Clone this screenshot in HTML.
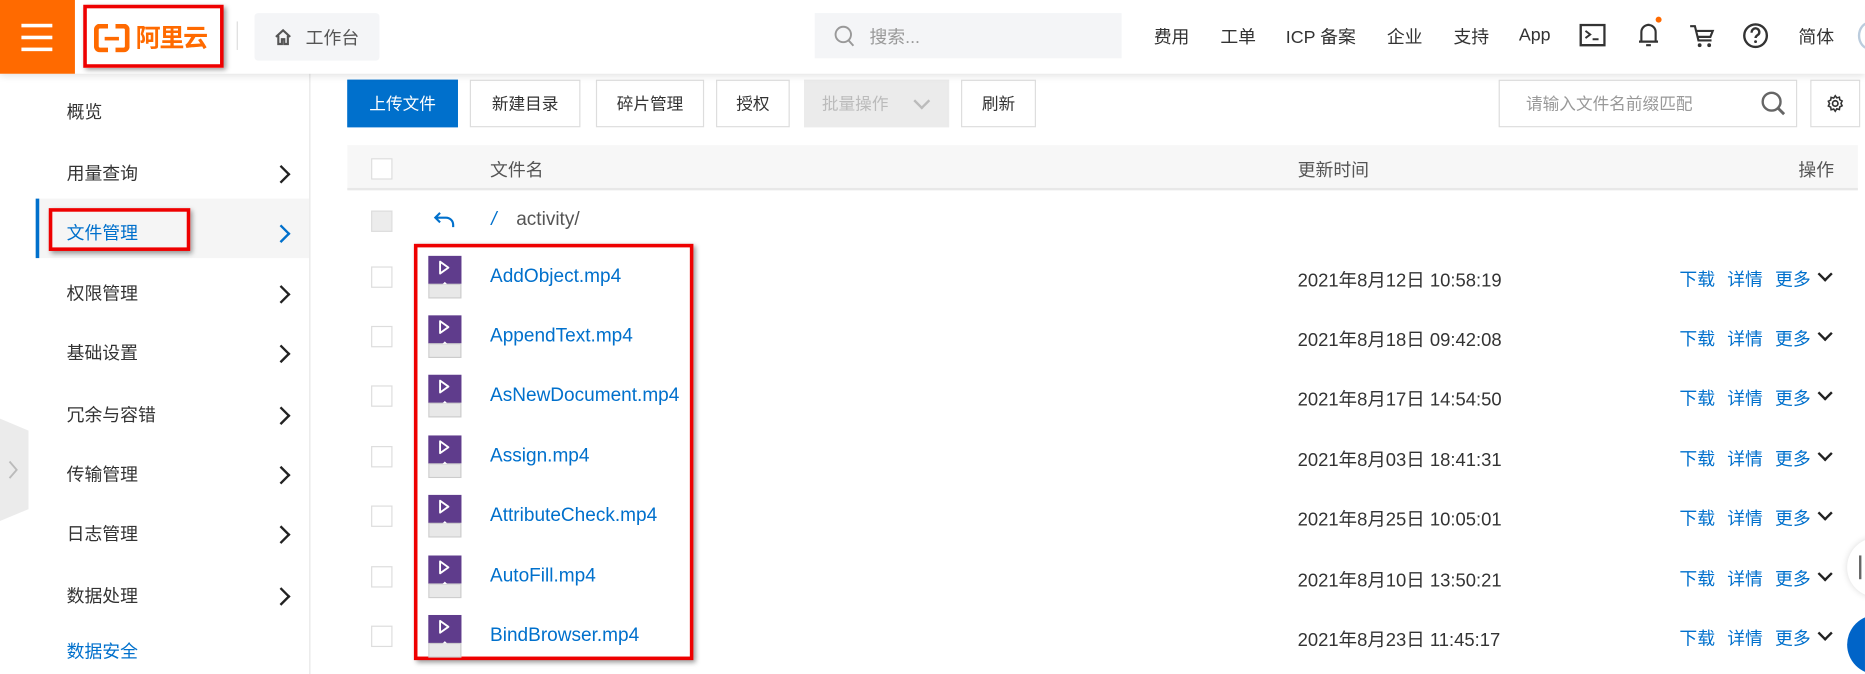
<!DOCTYPE html>
<html><head><meta charset="utf-8"><style>
*{margin:0;padding:0;box-sizing:border-box}
body{width:1865px;height:674px;overflow:hidden;background:#fff;font-family:"Liberation Sans","Noto Sans CJK SC",sans-serif;color:#333;position:relative}
#w{position:absolute;left:0;top:0;width:1568px;height:567px;transform:scale(1.1894);transform-origin:0 0;overflow:hidden}
.a{position:absolute}
.hdr{left:0;top:0;width:1568px;height:62px;background:#fff;box-shadow:0 2px 6px rgba(0,0,0,.12);z-index:2}
.nav{font-size:15px;color:#333;top:20px}
.side{font-size:15px;color:#333;left:56px}
.chev{left:231px;width:11px;height:11px;border-right:2px solid #222;border-top:2px solid #222;transform:rotate(45deg)}
.btn{top:67px;height:40px;border:1px solid #ddd;background:#fff;font-size:14px;color:#333;text-align:center;line-height:38px}
.cb{left:312px;width:18px;height:18px;border:1px solid #ddd;background:#fff}
.ic{left:360px;width:28px;height:36px}
.fn{left:412px;font-size:16px;color:#0070cc}
.dt{left:1091px;font-size:15.5px;color:#333}
.op{left:1412px;font-size:15px;color:#0070cc;word-spacing:6px}
.dn{left:1530px;width:9px;height:9px;border-right:2px solid #222;border-bottom:2px solid #222;transform:rotate(45deg)}
</style></head><body><div id="w">
<div class="a hdr">
 <div class="a" style="left:0;top:0;width:63px;height:62px;background:#ff6a00">
  <div class="a" style="left:18px;top:20px;width:26px;height:3px;background:#fff"></div>
  <div class="a" style="left:18px;top:30px;width:26px;height:3px;background:#fff"></div>
  <div class="a" style="left:18px;top:40px;width:26px;height:3px;background:#fff"></div>
 </div>
 <div class="a" style="left:70px;top:4px;width:118px;height:53px;border:3px solid #e00;box-shadow:2px 2px 4px rgba(0,0,0,.4)"></div>
 <div class="a" style="left:79px;top:20px;width:12px;height:24px;border:4px solid #ff6a00;border-right:none;border-radius:5px 0 0 5px"></div>
 <div class="a" style="left:97px;top:20px;width:12px;height:24px;border:4px solid #ff6a00;border-left:none;border-radius:0 5px 5px 0"></div>
 <div class="a" style="left:88px;top:31px;width:12px;height:3px;background:#ff6a00"></div>
 <div class="a" style="left:114px;top:16px;font-size:21px;font-weight:bold;color:#ff6a00;letter-spacing:-1px">阿里云</div>
 <div class="a" style="left:199px;top:18px;width:1px;height:24px;background:#ddd"></div>
 <div class="a" style="left:214px;top:11px;width:105px;height:40px;background:#f4f5f7;border-radius:3px">
  <svg class="a" style="left:16px;top:12px" width="16" height="16" viewBox="0 0 16 16"><path d="M2 8L8 2.5 14 8M4 7v7h3v-4h2v4h3V7" fill="none" stroke="#555" stroke-width="1.8"/></svg>
  <div class="a" style="left:43px;top:10px;font-size:15px;color:#555">工作台</div>
 </div>
 <div class="a" style="left:685px;top:11px;width:258px;height:38px;background:#f4f5f7">
  <svg class="a" style="left:16px;top:10px" width="18" height="19" viewBox="0 0 18 19"><circle cx="8" cy="8" r="6.5" fill="none" stroke="#999" stroke-width="1.6"/><path d="M12.5 13l4 4.5" stroke="#999" stroke-width="1.6"/></svg>
  <div class="a" style="left:46px;top:9px;font-size:15px;color:#999">搜索...</div>
 </div>
 <div class="a nav" style="left:970px">费用</div>
 <div class="a nav" style="left:1026px">工单</div>
 <div class="a nav" style="left:1081px">ICP 备案</div>
 <div class="a nav" style="left:1166px">企业</div>
 <div class="a nav" style="left:1222px">支持</div>
 <div class="a nav" style="left:1277px;top:21px">App</div>
 <svg class="a" style="left:1328px;top:20px" width="22" height="20" viewBox="0 0 22 20"><rect x="1" y="1" width="20" height="17" fill="none" stroke="#333" stroke-width="2"/><path d="M5 6l4 3-4 3M11 13h5" fill="none" stroke="#333" stroke-width="1.6"/></svg>
 <svg class="a" style="left:1376px;top:16px" width="20" height="26" viewBox="0 0 20 26"><path d="M4 19V11a6 6 0 0112 0v8M2 19h16M8 22h4M10 4v1" fill="none" stroke="#333" stroke-width="1.8"/></svg>
 <div class="a" style="left:1392px;top:14px;width:5px;height:5px;border-radius:50%;background:#ff6a00"></div>
 <svg class="a" style="left:1420px;top:19px" width="22" height="22" viewBox="0 0 22 22"><path d="M1 3h4l3 12h11M6 7h14l-2 5H8" fill="none" stroke="#333" stroke-width="1.8"/><circle cx="9" cy="19" r="1.6" fill="#333"/><circle cx="17" cy="19" r="1.6" fill="#333"/></svg>
 <svg class="a" style="left:1465px;top:19px" width="22" height="22" viewBox="0 0 22 22"><circle cx="11" cy="11" r="9.5" fill="none" stroke="#333" stroke-width="2"/><path d="M7.8 8.5a3.2 3.2 0 116 1c-1 1.3-2.8 1.6-2.8 3.5" fill="none" stroke="#333" stroke-width="2"/><circle cx="11" cy="16" r="1.2" fill="#333"/></svg>
 <div class="a nav" style="left:1512px">简体</div>
 <div class="a" style="left:1562px;top:18px;width:20px;height:24px;border-radius:50%;border:2px solid #bcd"></div>
</div>

<div class="a" style="left:260px;top:62px;width:1px;height:510px;background:#e5e5e5"></div>
<div class="a side" style="top:83px">概览</div>
<div class="a side" style="top:135px">用量查询</div><div class="a chev" style="top:141px"></div>
<div class="a" style="left:30px;top:167px;width:230px;height:50px;background:#f5f5f5;border-left:3px solid #0070cc"></div>
<div class="a" style="left:41px;top:175px;width:119px;height:36px;border:3px solid #e00;box-shadow:2px 2px 4px rgba(0,0,0,.4)"></div>
<div class="a side" style="top:185px;color:#0070cc">文件管理</div><div class="a chev" style="top:191px;border-color:#0070cc"></div>
<div class="a side" style="top:236px">权限管理</div><div class="a chev" style="top:242px"></div>
<div class="a side" style="top:286px">基础设置</div><div class="a chev" style="top:292px"></div>
<div class="a side" style="top:338px">冗余与容错</div><div class="a chev" style="top:344px"></div>
<div class="a side" style="top:388px">传输管理</div><div class="a chev" style="top:394px"></div>
<div class="a side" style="top:438px">日志管理</div><div class="a chev" style="top:444px"></div>
<div class="a side" style="top:490px">数据处理</div><div class="a chev" style="top:496px"></div>
<div class="a side" style="top:537px;color:#0070cc">数据安全</div>
<svg class="a" style="left:0;top:352px" width="24" height="86" viewBox="0 0 24 86"><path d="M0 0L24 10V76L0 86Z" fill="#ebebeb"/><path d="M8 36l6 7-6 7" fill="none" stroke="#bbb" stroke-width="1.6"/></svg>

<div class="a btn" style="left:292px;width:93px;background:#0070cc;border-color:#0070cc;color:#fff">上传文件</div>
<div class="a btn" style="left:395px;width:93px">新建目录</div>
<div class="a btn" style="left:501px;width:91px">碎片管理</div>
<div class="a btn" style="left:602px;width:62px">授权</div>
<div class="a btn" style="left:676px;width:122px;background:#ebebeb;border-color:#ebebeb;color:#bbb;text-align:left;padding-left:14px">批量操作<span class="a" style="left:93px;top:12px;width:10px;height:10px;border-right:2px solid #bbb;border-bottom:2px solid #bbb;transform:rotate(45deg)"></span></div>
<div class="a btn" style="left:808px;width:63px">刷新</div>
<div class="a btn" style="left:1260px;width:251px;text-align:left;padding-left:22px;color:#999">请输入文件名前缀匹配
 <svg class="a" style="left:219px;top:8px" width="22" height="22" viewBox="0 0 22 22"><circle cx="9.5" cy="9.5" r="7.5" fill="none" stroke="#666" stroke-width="2"/><path d="M15 15l5 5" stroke="#666" stroke-width="2.4"/></svg></div>
<div class="a btn" style="left:1522px;width:42px">
 <svg class="a" style="left:12px;top:11px" width="16" height="16" viewBox="0 0 16 16"><circle cx="8" cy="8" r="2.3" fill="none" stroke="#333" stroke-width="1.4"/><path d="M8 1.5l1.3 1.8 2.2-.6.3 2.2 2 1-1 2 1 2-2 1-.3 2.2-2.2-.6L8 14.5l-1.3-1.8-2.2.6-.3-2.2-2-1 1-2-1-2 2-1 .3-2.2 2.2.6z" fill="none" stroke="#333" stroke-width="1.3"/></svg></div>

<div class="a" style="left:292px;top:122px;width:1270px;height:38px;background:#f7f7f7;border-bottom:2px solid #e8e8e8"></div>
<div class="a cb" style="top:133px"></div>
<div class="a" style="left:412px;top:132px;font-size:15px;color:#555">文件名</div>
<div class="a" style="left:1091px;top:132px;font-size:15px;color:#555">更新时间</div>
<div class="a" style="left:1512px;top:132px;font-size:15px;color:#555">操作</div>

<div class="a cb" style="top:177px;background:#ececec"></div>
<svg class="a" style="left:364px;top:177px" width="20" height="16" viewBox="0 0 20 16"><path d="M6 2L2 6l4 4M2 6h9a6 6 0 016 6v2" fill="none" stroke="#0070cc" stroke-width="1.8"/></svg>
<div class="a" style="left:413px;top:176px;font-size:16px;color:#0070cc;font-style:italic">/</div>
<div class="a" style="left:434px;top:176px;font-size:16px;color:#555">activity/</div>

<div class="a" style="left:348px;top:205px;width:235px;height:350px;border:3px solid #e00;box-shadow:2px 2px 4px rgba(0,0,0,.4)"></div>

<div class="a cb" style="top:224px"></div><svg class="a ic" style="top:215px" viewBox="0 0 28 36"><rect width="28" height="24" fill="#5f3c8c"/><rect x=".5" y="24" width="27" height="11.5" fill="#e8e8e8" stroke="#ccc"/><path d="M10 5v10l7-5z" fill="none" stroke="#fff" stroke-width="1.6" stroke-linejoin="round"/><path d="M12 24l2-2 2 2z" fill="#fff"/></svg><div class="a fn" style="top:224px">AddObject.mp4</div><div class="a dt" style="top:224px">2021年8月12日 10:58:19</div><div class="a op" style="top:224px">下载 详情 更多</div><div class="a dn" style="top:226px"></div>

<div class="a cb" style="top:274px"></div><svg class="a ic" style="top:265px" viewBox="0 0 28 36"><rect width="28" height="24" fill="#5f3c8c"/><rect x=".5" y="24" width="27" height="11.5" fill="#e8e8e8" stroke="#ccc"/><path d="M10 5v10l7-5z" fill="none" stroke="#fff" stroke-width="1.6" stroke-linejoin="round"/><path d="M12 24l2-2 2 2z" fill="#fff"/></svg><div class="a fn" style="top:274px">AppendText.mp4</div><div class="a dt" style="top:274px">2021年8月18日 09:42:08</div><div class="a op" style="top:274px">下载 详情 更多</div><div class="a dn" style="top:276px"></div>

<div class="a cb" style="top:324px"></div><svg class="a ic" style="top:315px" viewBox="0 0 28 36"><rect width="28" height="24" fill="#5f3c8c"/><rect x=".5" y="24" width="27" height="11.5" fill="#e8e8e8" stroke="#ccc"/><path d="M10 5v10l7-5z" fill="none" stroke="#fff" stroke-width="1.6" stroke-linejoin="round"/><path d="M12 24l2-2 2 2z" fill="#fff"/></svg><div class="a fn" style="top:324px">AsNewDocument.mp4</div><div class="a dt" style="top:324px">2021年8月17日 14:54:50</div><div class="a op" style="top:324px">下载 详情 更多</div><div class="a dn" style="top:326px"></div>

<div class="a cb" style="top:375px"></div><svg class="a ic" style="top:366px" viewBox="0 0 28 36"><rect width="28" height="24" fill="#5f3c8c"/><rect x=".5" y="24" width="27" height="11.5" fill="#e8e8e8" stroke="#ccc"/><path d="M10 5v10l7-5z" fill="none" stroke="#fff" stroke-width="1.6" stroke-linejoin="round"/><path d="M12 24l2-2 2 2z" fill="#fff"/></svg><div class="a fn" style="top:375px">Assign.mp4</div><div class="a dt" style="top:375px">2021年8月03日 18:41:31</div><div class="a op" style="top:375px">下载 详情 更多</div><div class="a dn" style="top:377px"></div>

<div class="a cb" style="top:425px"></div><svg class="a ic" style="top:416px" viewBox="0 0 28 36"><rect width="28" height="24" fill="#5f3c8c"/><rect x=".5" y="24" width="27" height="11.5" fill="#e8e8e8" stroke="#ccc"/><path d="M10 5v10l7-5z" fill="none" stroke="#fff" stroke-width="1.6" stroke-linejoin="round"/><path d="M12 24l2-2 2 2z" fill="#fff"/></svg><div class="a fn" style="top:425px">AttributeCheck.mp4</div><div class="a dt" style="top:425px">2021年8月25日 10:05:01</div><div class="a op" style="top:425px">下载 详情 更多</div><div class="a dn" style="top:427px"></div>

<div class="a cb" style="top:476px"></div><svg class="a ic" style="top:467px" viewBox="0 0 28 36"><rect width="28" height="24" fill="#5f3c8c"/><rect x=".5" y="24" width="27" height="11.5" fill="#e8e8e8" stroke="#ccc"/><path d="M10 5v10l7-5z" fill="none" stroke="#fff" stroke-width="1.6" stroke-linejoin="round"/><path d="M12 24l2-2 2 2z" fill="#fff"/></svg><div class="a fn" style="top:476px">AutoFill.mp4</div><div class="a dt" style="top:476px">2021年8月10日 13:50:21</div><div class="a op" style="top:476px">下载 详情 更多</div><div class="a dn" style="top:478px"></div>

<div class="a cb" style="top:526px"></div><svg class="a ic" style="top:517px" viewBox="0 0 28 36"><rect width="28" height="24" fill="#5f3c8c"/><rect x=".5" y="24" width="27" height="11.5" fill="#e8e8e8" stroke="#ccc"/><path d="M10 5v10l7-5z" fill="none" stroke="#fff" stroke-width="1.6" stroke-linejoin="round"/><path d="M12 24l2-2 2 2z" fill="#fff"/></svg><div class="a fn" style="top:526px">BindBrowser.mp4</div><div class="a dt" style="top:526px">2021年8月23日 11:45:17</div><div class="a op" style="top:526px">下载 详情 更多</div><div class="a dn" style="top:528px"></div>

<div class="a" style="left:1553px;top:452px;width:50px;height:50px;border-radius:50%;background:#fff;box-shadow:0 0 6px rgba(0,0,0,.15)"></div>
<div class="a" style="left:1563px;top:467px;width:2px;height:20px;background:#666"></div>
<div class="a" style="left:1553px;top:517px;width:50px;height:50px;border-radius:50%;background:#0064c8"></div>
</div></body></html>
